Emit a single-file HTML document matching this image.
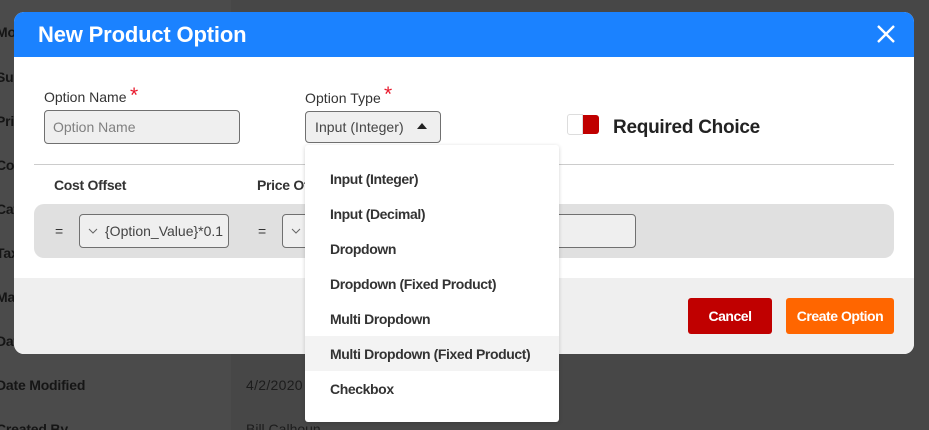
<!DOCTYPE html>
<html><head><meta charset="utf-8">
<style>
html,body{margin:0;padding:0;width:929px;height:430px;overflow:hidden}
#w{width:929px;height:430px;overflow:hidden;position:relative;background:#4b4b4b;font-family:"Liberation Sans",sans-serif;color:#222}
.a{position:absolute;white-space:nowrap}
.bg{font-weight:bold;font-size:14px;color:#151515;left:-4px;letter-spacing:-.2px}
.lab{font-size:14px;color:#333}
.req{color:#e8192c;font-size:21px;line-height:20px}
.field{box-sizing:border-box;background:#efefef;border:1px solid #707070;border-radius:4px}
.th{font-weight:bold;font-size:14px;color:#333;letter-spacing:-.3px}
.item{position:absolute;left:0;width:254px;height:35px;line-height:35px;padding-left:25px;box-sizing:border-box;font-weight:bold;font-size:14px;letter-spacing:-.4px;color:#333;white-space:nowrap}
.btn{position:absolute;top:298px;height:36px;line-height:36px;border-radius:3px;color:#fff;font-weight:bold;font-size:14px;letter-spacing:-.47px;text-align:center}
</style></head><body><div id="w">
<div class="a" style="left:231px;top:0;width:698px;height:430px;background:#474747"></div>
<div class="a bg" style="top:24px">Model</div>
<div class="a bg" style="top:69px">Sub</div>
<div class="a bg" style="top:113px">Price</div>
<div class="a bg" style="top:157px">Cost</div>
<div class="a bg" style="top:201px">Cat</div>
<div class="a bg" style="top:245px">Tax</div>
<div class="a bg" style="top:289px">Man</div>
<div class="a bg" style="top:333px">Date</div>
<div class="a bg" style="top:377px">Date Modified</div>
<div class="a bg" style="top:421px">Created By</div>
<div class="a" style="left:246px;top:377px;font-size:14px;color:#1c1c1c;letter-spacing:.3px">4/2/2020</div>
<div class="a" style="left:246px;top:421px;font-size:14px;color:#1c1c1c">Bill Calhoun</div>

<div class="a" style="left:14px;top:12px;width:900px;height:342px;background:#fff;border-radius:10px;overflow:hidden">
  <div class="a" style="left:0;top:0;width:900px;height:45px;background:#1b82ff"></div>
  <div class="a" style="left:0;top:266px;width:900px;height:76px;background:#efefef"></div>
</div>
<div class="a" style="left:38px;top:21px;font-size:22px;line-height:28px;font-weight:bold;letter-spacing:-.17px;color:#fff">New Product Option</div>
<svg class="a" style="left:876px;top:24px" width="20" height="20" viewBox="0 0 20 20"><path d="M2 2L18 18M18 2L2 18" stroke="#fff" stroke-width="2.4" fill="none"/></svg>

<div class="a lab" style="left:44px;top:89px">Option Name</div>
<div class="a req" style="left:130px;top:86px">*</div>
<div class="a field" style="left:44px;top:110px;width:196px;height:34px;line-height:32px;padding-left:8px;font-size:14px;color:#808080">Option Name</div>

<div class="a lab" style="left:305px;top:90px;letter-spacing:.05px">Option Type</div>
<div class="a req" style="left:384px;top:85px">*</div>
<div class="a field" style="left:305px;top:111px;width:136px;height:32px;line-height:30px;padding-left:9px;font-size:14px;color:#444;letter-spacing:.05px">Input (Integer)</div>
<div class="a" style="left:417px;top:123px;width:0;height:0;border-left:5px solid transparent;border-right:5px solid transparent;border-bottom:6px solid #222"></div>

<div class="a" style="left:567px;top:114px;width:16px;height:21px;box-sizing:border-box;background:#fff;border:1px solid #ddd;border-radius:3px 0 0 3px"></div>
<div class="a" style="left:583px;top:115px;width:16px;height:19px;background:#c00000;border-radius:0 3px 3px 0"></div>
<div class="a" style="left:613px;top:116px;font-size:19px;line-height:24px;font-weight:bold;letter-spacing:-.27px;color:#222">Required Choice</div>

<div class="a" style="left:34px;top:164px;width:860px;height:1px;background:#ccc"></div>
<div class="a th" style="left:54px;top:177px">Cost Offset</div>
<div class="a th" style="left:257px;top:177px">Price Offset</div>

<div class="a" style="left:34px;top:204px;width:860px;height:54px;background:#e0e0e0;border-radius:10px"></div>
<div class="a" style="left:55px;top:223px;font-size:14px;color:#333">=</div>
<div class="a field" style="left:79px;top:214px;width:150px;height:34px;line-height:32px;padding-left:25px;font-size:14px;color:#444">{Option_Value}*0.1</div>
<svg class="a" style="left:88px;top:228px" width="10" height="7" viewBox="0 0 10 7"><path d="M1 1L5 5L9 1" stroke="#666" stroke-width="1" fill="none"/></svg>
<div class="a" style="left:258px;top:223px;font-size:14px;color:#333">=</div>
<div class="a field" style="left:282px;top:214px;width:354px;height:34px"></div>
<svg class="a" style="left:291px;top:228px" width="10" height="7" viewBox="0 0 10 7"><path d="M1 1L5 5L9 1" stroke="#666" stroke-width="1" fill="none"/></svg>

<div class="btn" style="left:688px;width:84px;background:#c00000">Cancel</div>
<div class="btn" style="left:786px;width:108px;background:#ff6600">Create Option</div>

<div class="a" style="left:305px;top:145px;width:254px;height:277px;background:#fff;border-radius:3px;box-shadow:0 1px 4px rgba(0,0,0,.18);overflow:hidden">
  <div class="item" style="top:17px">Input (Integer)</div>
  <div class="item" style="top:52px">Input (Decimal)</div>
  <div class="item" style="top:87px">Dropdown</div>
  <div class="item" style="top:122px">Dropdown (Fixed Product)</div>
  <div class="item" style="top:157px">Multi Dropdown</div>
  <div class="item" style="top:191px;background:#f3f3f3;line-height:37px">Multi Dropdown (Fixed Product)</div>
  <div class="item" style="top:227px">Checkbox</div>
</div>
</div></body></html>
